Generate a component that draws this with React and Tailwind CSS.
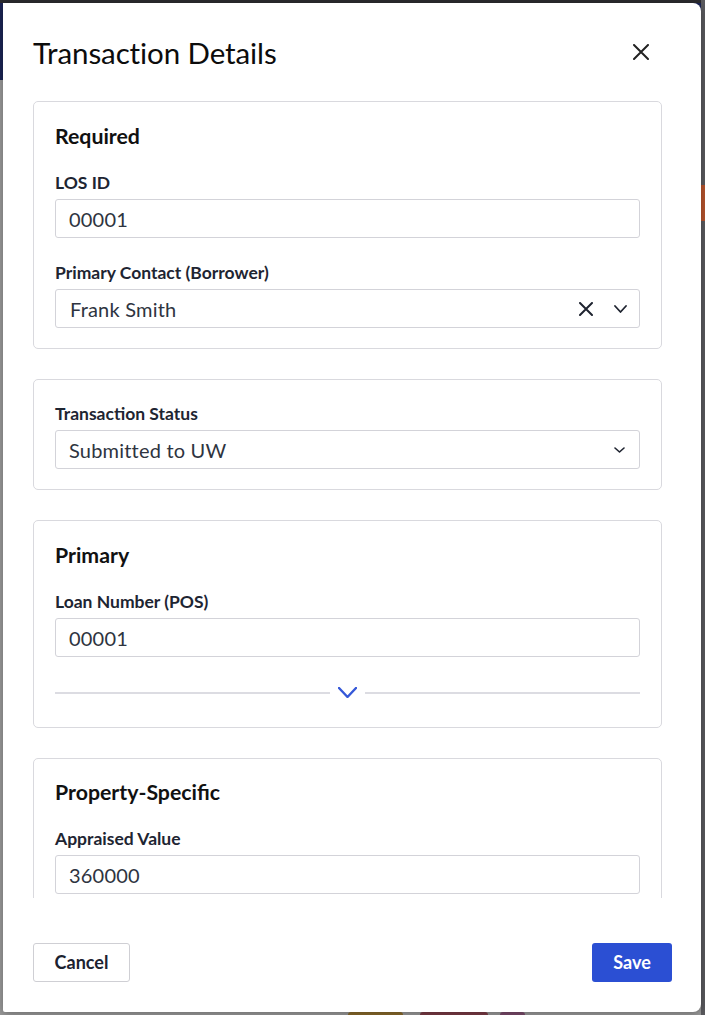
import React from "react";

function Chevron({ className = "", w = 13, h = 7, stroke = "#1f2430", sw = 1.8 }) {
  return (
    <svg width={w} height={h} viewBox={`0 0 ${w} ${h}`} className={className} fill="none">
      <path d={`M1 1 L${w / 2} ${h - 1} L${w - 1} 1`} stroke={stroke} strokeWidth={sw} strokeLinecap="round" strokeLinejoin="round" />
    </svg>
  );
}

function XIcon({ size = 16, sw = 2, stroke = "#1f2430" }) {
  return (
    <svg width={size} height={size} viewBox={`0 0 ${size} ${size}`} fill="none">
      <path d={`M1 1 L${size - 1} ${size - 1} M${size - 1} 1 L1 ${size - 1}`} stroke={stroke} strokeWidth={sw} strokeLinecap="round" />
    </svg>
  );
}

function Label({ children }) {
  return <div className="text-[17.5px] font-bold leading-[24px] text-[#1e2532]">{children}</div>;
}

function Field({ value, children }) {
  return (
    <div className="mt-[4px] flex h-[39px] items-center rounded-[3px] border border-[#d3d3d9] bg-white pl-[13px] pr-[12px] text-[20px] tracking-[0.2px] text-[#2e3440]">
      <span className="flex-1">{value}</span>
      {children}
    </div>
  );
}

function Card({ title, children, className = "" }) {
  return (
    <div className={`rounded-[5px] border border-[#d9d9de] bg-white px-[21px] ${className}`}>
      {title && <div className="text-[21.3px] font-bold leading-[28px] text-[#111]">{title}</div>}
      {children}
    </div>
  );
}

export default function App() {
  return (
    <div className="relative h-[1015px] w-[705px] overflow-hidden bg-[#9a9a9a] font-['Lato','Noto_Sans',sans-serif]">
      <div className="absolute left-0 top-0 h-[80px] w-full bg-[#1b2454]" />
      <div className="absolute left-0 top-0 h-[3px] w-full bg-[#2a2a2e]" />
      <div className="absolute right-0 top-0 h-full w-[4px] bg-[#5a5a5e]" />
      <div className="absolute right-0 top-[185px] h-[36px] w-[4px] bg-[#b5532c]" />
      <div className="absolute bottom-0 left-[348px] h-[3px] w-[55px] rounded-t-full bg-[#8a6a2a]" />
      <div className="absolute bottom-0 left-[420px] h-[3px] w-[68px] rounded-t-full bg-[#7a3a44]" />
      <div className="absolute bottom-0 left-[500px] h-[3px] w-[25px] rounded-t-full bg-[#7a4a6a]" />

      <div className="absolute left-[3px] top-[3px] flex h-[1009px] w-[698px] flex-col overflow-hidden rounded-r-[8px] rounded-bl-[2px] bg-white shadow-[0_2px_10px_rgba(0,0,0,0.3)]">
        <div className="flex h-[98px] shrink-0 items-start justify-between pl-[30px] pr-[52px] pt-[32px]">
          <div className="text-[29.5px] leading-[36px] tracking-[-0.1px] text-[#0c0c0c]">Transaction Details</div>
          <div className="mt-[9px]">
            <XIcon size={16} sw={2} stroke="#222" />
          </div>
        </div>

        <div className="flex h-[797px] shrink-0 flex-col gap-[30px] overflow-hidden pl-[30px] pr-[39px]">
          <Card title="Required" className="pb-[20px] pt-[20px]">
            <div className="mt-[21px]">
              <Label>LOS ID</Label>
              <Field value="00001" />
            </div>
            <div className="mt-[23px]">
              <Label>Primary Contact (Borrower)</Label>
              <Field value={<span className="pl-[1px]">Frank Smith</span>}>
                <div className="flex items-center gap-[21px]">
                  <XIcon size={14} sw={2} stroke="#1f2430" />
                  <Chevron w={13} h={8} sw={1.8} />
                </div>
              </Field>
            </div>
          </Card>

          <Card className="pb-[20px] pt-[22px]">
            <Label>Transaction Status</Label>
            <Field value="Submitted to UW">
              <div className="pr-[2px]">
                <Chevron w={11} h={6} sw={1.6} />
              </div>
            </Field>
          </Card>

          <Card title="Primary" className="pb-[29px] pt-[20px]">
            <div className="mt-[21px]">
              <Label>Loan Number (POS)</Label>
              <Field value="00001" />
            </div>
            <div className="mt-[30px] flex items-center">
              <div className="h-[2px] flex-1 bg-[#dcdce2]" />
              <div className="flex w-[35px] justify-center">
                <Chevron w={19} h={11} sw={2.4} stroke="#3558d8" />
              </div>
              <div className="h-[2px] flex-1 bg-[#dcdce2]" />
            </div>
          </Card>

          <Card title="Property-Specific" className="shrink-0 pb-[21px] pt-[19px]">
            <div className="mt-[21px]">
              <Label>Appraised Value</Label>
              <Field value="360000" />
            </div>
          </Card>
        </div>

        <div className="flex flex-1 items-start justify-between pl-[30px] pr-[29px] pt-[45px]">
          <button className="h-[39px] w-[97px] rounded-[3px] border border-[#cfcfd4] bg-white text-[18px] font-bold text-[#1c2230]">
            Cancel
          </button>
          <button className="h-[39px] w-[80px] rounded-[3px] bg-[#2b4fd3] text-[18px] font-bold text-white">
            Save
          </button>
        </div>
      </div>
    </div>
  );
}
